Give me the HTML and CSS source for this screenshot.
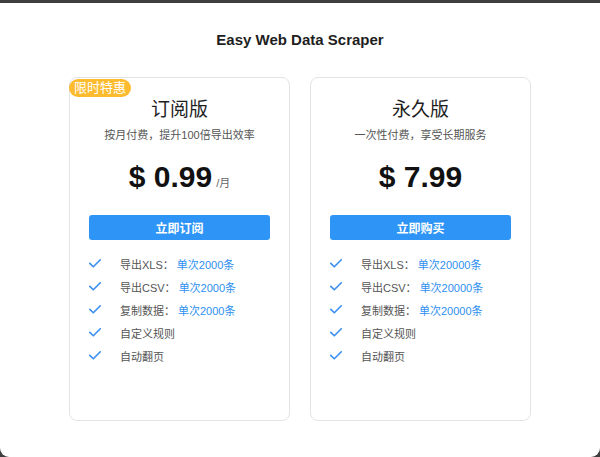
FILE: index.html
```html
<!DOCTYPE html>
<html lang="zh">
<head>
<meta charset="utf-8">
<title>Easy Web Data Scraper</title>
<link rel="stylesheet" href="styles.css">
</head>
<body>
<div class="modal">
  <h1 class="title">Easy Web Data Scraper</h1>
  <div class="cards">
    <div class="card">
      <span class="badge">限时特惠</span>
      <h2 class="plan">订阅版</h2>
      <p class="desc">按月付费，提升100倍导出效率</p>
      <div class="price">$ 0.99<span class="unit">/月</span></div>
      <button class="btn">立即订阅</button>
      <ul class="features">
        <li><svg class="check" viewBox="0 0 12 9"><path d="M0.8 4.4 L4.3 7.8 L11.3 0.8"/></svg><span class="label">导出XLS：</span><span class="hl">单次2000条</span></li>
        <li><svg class="check" viewBox="0 0 12 9"><path d="M0.8 4.4 L4.3 7.8 L11.3 0.8"/></svg><span class="label">导出CSV：</span><span class="hl">单次2000条</span></li>
        <li><svg class="check" viewBox="0 0 12 9"><path d="M0.8 4.4 L4.3 7.8 L11.3 0.8"/></svg><span class="label">复制数据：</span><span class="hl">单次2000条</span></li>
        <li><svg class="check" viewBox="0 0 12 9"><path d="M0.8 4.4 L4.3 7.8 L11.3 0.8"/></svg><span class="label">自定义规则</span></li>
        <li><svg class="check" viewBox="0 0 12 9"><path d="M0.8 4.4 L4.3 7.8 L11.3 0.8"/></svg><span class="label">自动翻页</span></li>
      </ul>
    </div>
    <div class="card">
      <h2 class="plan">永久版</h2>
      <p class="desc">一次性付费，享受长期服务</p>
      <div class="price">$ 7.99</div>
      <button class="btn">立即购买</button>
      <ul class="features">
        <li><svg class="check" viewBox="0 0 12 9"><path d="M0.8 4.4 L4.3 7.8 L11.3 0.8"/></svg><span class="label">导出XLS：</span><span class="hl">单次20000条</span></li>
        <li><svg class="check" viewBox="0 0 12 9"><path d="M0.8 4.4 L4.3 7.8 L11.3 0.8"/></svg><span class="label">导出CSV：</span><span class="hl">单次20000条</span></li>
        <li><svg class="check" viewBox="0 0 12 9"><path d="M0.8 4.4 L4.3 7.8 L11.3 0.8"/></svg><span class="label">复制数据：</span><span class="hl">单次20000条</span></li>
        <li><svg class="check" viewBox="0 0 12 9"><path d="M0.8 4.4 L4.3 7.8 L11.3 0.8"/></svg><span class="label">自定义规则</span></li>
        <li><svg class="check" viewBox="0 0 12 9"><path d="M0.8 4.4 L4.3 7.8 L11.3 0.8"/></svg><span class="label">自动翻页</span></li>
      </ul>
    </div>
  </div>
</div>
</body>
</html>
```

FILE: styles.css
```css
* { box-sizing: border-box; }
html, body {
  margin: 0;
  padding: 0;
  height: 457px;
  background: #3e3e3e;
  overflow: hidden;
}
body {
  font-family: "Liberation Sans", "Noto Sans CJK SC", sans-serif;
  color: #222;
}
.modal {
  margin-top: 3px;
  height: 454px;
  background: #fff;
  border-radius: 0 0 9px 9px;
  padding-top: 27px;
}
.title {
  margin: 0;
  font-size: 15px;
  line-height: 20px;
  font-weight: bold;
  text-align: center;
  color: #1e1e1e;
}
.cards {
  display: flex;
  justify-content: center;
  gap: 20px;
  margin-top: 27px;
}
.card {
  position: relative;
  width: 221px;
  height: 344px;
  border: 1px solid #e3e3e3;
  border-radius: 8px;
  padding: 19px 19px 0;
  text-align: center;
}
.badge {
  position: absolute;
  top: 1px;
  left: -1px;
  height: 18px;
  padding: 0 5px;
  border-radius: 9px;
  background: #fdbc2f;
  color: #fff;
  font-size: 13px;
  line-height: 18px;
}
.plan {
  margin: 0;
  font-size: 19px;
  line-height: 26px;
  font-weight: normal;
  color: #1f1f1f;
}
.desc {
  margin: 4px 0 0;
  font-size: 11px;
  line-height: 16px;
  color: #555;
}
.price {
  display: flex;
  justify-content: center;
  align-items: baseline;
  height: 36px;
  margin-top: 16px;
  font-size: 30px;
  line-height: 36px;
  font-weight: bold;
  color: #111;
}
.unit {
  margin-left: 4px;
  font-size: 11px;
  line-height: 1;
  font-weight: normal;
  color: #666;
}
.btn {
  display: block;
  width: 100%;
  height: 25px;
  margin-top: 20px;
  border: none;
  border-radius: 3px;
  background: #2e95f6;
  color: #fff;
  font-family: inherit;
  font-size: 12px;
  font-weight: bold;
  padding: 0;
}
.features {
  list-style: none;
  margin: 12px 0 0;
  padding: 0;
  text-align: left;
}
.features li {
  display: flex;
  align-items: center;
  height: 23px;
  font-size: 11px;
  color: #555;
}
.check {
  width: 12px;
  height: 9px;
  margin-right: 19px;
  fill: none;
  stroke: #3a8ff0;
  stroke-width: 1.6;
  stroke-linecap: round;
  stroke-linejoin: round;
}
.hl {
  margin-left: 3px;
  color: #2f8ff0;
}
```
